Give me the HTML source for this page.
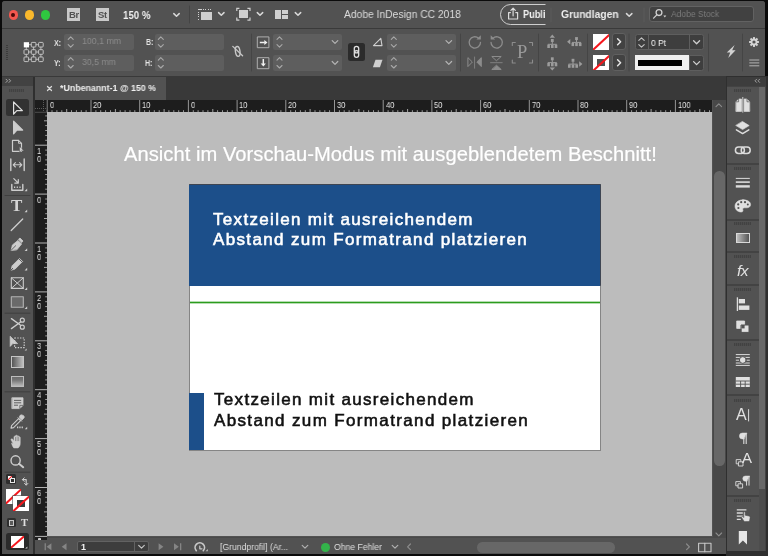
<!DOCTYPE html>
<html><head><meta charset="utf-8">
<style>
html,body{margin:0;padding:0;}
body{width:768px;height:556px;overflow:hidden;background:#0b0b0b;font-family:"Liberation Sans",sans-serif;position:relative;}
.a{position:absolute;}
#win{left:1.8px;top:1px;width:763.5px;height:553px;background:#525252;border-radius:3px 3px 0 0;overflow:hidden;}
svg{position:absolute;overflow:visible;}
.t{position:absolute;white-space:nowrap;color:#e6e6e6;will-change:transform;}
</style></head><body>
<div id="win" class="a"></div>
<!-- title bar -->
<div class="a" id="titlebar" style="left:1.8px;top:1px;width:763.5px;height:27px;background:#525252;border-radius:3px 3px 0 0;"></div>

<!-- ===== TITLE BAR CONTENT ===== -->
<div class="a" style="left:8.5px;top:10.4px;width:9.6px;height:9.6px;border-radius:50%;background:#f4574f;"></div>
<div class="a" style="left:11.4px;top:13.3px;width:3.8px;height:3.8px;border-radius:50%;background:#4a0a08;"></div>
<div class="a" style="left:24.6px;top:10.4px;width:9.6px;height:9.6px;border-radius:50%;background:#fbb92c;"></div>
<div class="a" style="left:40.6px;top:10.4px;width:9.6px;height:9.6px;border-radius:50%;background:#2fc840;"></div>
<div class="a" style="left:67px;top:8px;width:13px;height:12.6px;background:#c9c9c9;"></div>
<div class="t" style="left:68.6px;top:9px;font-size:9.5px;color:#525252;font-weight:bold;letter-spacing:-0.3px;">Br</div>
<div class="a" style="left:96px;top:8px;width:13px;height:12.6px;background:#c9c9c9;"></div>
<div class="t" style="left:98px;top:9px;font-size:9.5px;color:#525252;font-weight:bold;letter-spacing:-0.3px;">St</div>
<div class="t sx" style="left:122.5px;top:8.5px;font-size:11.5px;color:#f0f0f0;font-weight:bold;transform:scaleX(0.843);">150 %</div>
<svg style="left:0;top:0" width="768" height="100" fill="none" stroke="#d8d8d8" stroke-width="1.3" stroke-linecap="round" stroke-linejoin="round">
<g stroke-width="1.500"><path d="M173.800 13.600l2.700 2.700l2.700-2.700"/>
<path d="M218.600 12.600l2.700 2.700l2.700-2.700"/>
<path d="M257.300 12.600l2.700 2.700l2.700-2.700"/>
<path d="M295.300 12.600l2.700 2.700l2.700-2.700"/>
<path d="M626.500 13.600l2.700 2.700l2.700-2.700"/></g>
<path d="M189.500 6v17" stroke="#444" stroke-width="1"/>
<path d="M551 8v14" stroke="#5a5a5a" stroke-width="1"/>
<path d="M644 8v14" stroke="#5a5a5a" stroke-width="1"/>
</svg>
<!-- view options icon -->
<div class="a" style="left:201px;top:11.5px;width:11px;height:8.5px;background:#cfcfcf;"></div>
<div class="a" style="left:201px;top:8.5px;width:11px;height:1.5px;background:repeating-linear-gradient(90deg,#cfcfcf 0 1px,transparent 1px 2.2px);"></div>
<div class="a" style="left:197.5px;top:11.5px;width:1.5px;height:8.5px;background:repeating-linear-gradient(180deg,#cfcfcf 0 1px,transparent 1px 2.2px);"></div>
<div class="a" style="left:197.5px;top:8.5px;width:3px;height:1px;background:#cfcfcf;"></div>
<!-- screen mode icon -->
<div class="a" style="left:239px;top:10.4px;width:8.6px;height:7.8px;background:#cfcfcf;"></div>
<svg style="left:0;top:0" width="768" height="100" fill="none" stroke="#cfcfcf" stroke-width="1.2">
<path d="M236.8 11v-2.6h2.6M247.4 8.400h2.6v2.600M250 17.600v2.600h-2.600M239.400 20.200h-2.600v-2.600"/>
</svg>
<!-- arrange icon -->
<div class="a" style="left:274.5px;top:9.5px;width:6px;height:9.5px;background:#cfcfcf;"></div>
<div class="a" style="left:281.5px;top:9.5px;width:6.5px;height:4.2px;background:#cfcfcf;"></div>
<div class="a" style="left:281.5px;top:14.8px;width:6.5px;height:4.2px;background:#cfcfcf;"></div>
<div class="t sx" style="left:343.7px;top:7.5px;font-size:10.5px;color:#dcdcdc;transform:scaleX(0.981);">Adobe InDesign CC 2018</div>
<!-- publish pill -->
<div class="a" style="left:499.5px;top:3.5px;width:60px;height:21.5px;border:1.5px solid #cecece;border-radius:11px;box-sizing:border-box;clip-path:inset(0 14px 0 0);"></div>
<svg style="left:0;top:0" width="768" height="100" fill="none" stroke="#dcdcdc" stroke-width="1.2" stroke-linejoin="round" stroke-linecap="round">
<path d="M510.4 12.600h-1.800v6.400h9v-6.400h-1.800M513.100 15.800v-7.200M510.900 10.400l2.200-2.200l2.200 2.200"/>
</svg>
<div class="t sx" style="left:523px;top:7.6px;font-size:10.5px;color:#f2f2f2;font-weight:bold;transform:scaleX(0.876);">Publi</div>
<div class="t sx" style="left:560.5px;top:7.5px;font-size:10.5px;color:#ececec;font-weight:bold;transform:scaleX(0.976);">Grundlagen</div>
<!-- search -->
<div class="a" style="left:649.3px;top:6.2px;width:104.5px;height:16px;background:#414141;border:1px solid #626262;border-radius:3px;box-sizing:border-box;"></div>
<svg style="left:0;top:0" width="768" height="100" fill="none" stroke="#cfcfcf" stroke-width="1.3" stroke-linecap="round">
<circle cx="659" cy="12.6" r="2.9"/><path d="M656.8 14.9l-3.2 3.2"/><path d="M663.3 15.6h3l-1.5 1.8z" fill="#cfcfcf" stroke="none"/>
</svg>
<div class="t sx" style="left:670.5px;top:7.7px;font-size:9.5px;color:#7c7c7c;transform:scaleX(0.895);">Adobe Stock</div>
<!-- control bar -->
<div class="a" id="ctrl" style="left:1.8px;top:28px;width:763.5px;height:48px;background:#525252;border-top:1px solid #3a3a3a;box-sizing:border-box;"></div>

<!-- ===== CONTROL BAR CONTENT ===== -->
<style>
.f{position:absolute;background:#5e5e5e;border-radius:2px;}
.lb{will-change:transform;position:absolute;font-size:9.5px;font-weight:bold;color:#e4e4e4;white-space:nowrap;transform:scaleX(0.74);transform-origin:0 50%;}
.sx{transform-origin:0 50%;}
</style>
<div class="a" style="left:6px;top:44.5px;width:2px;height:15px;background:repeating-linear-gradient(180deg,#3c3c3c 0 1px,transparent 1px 2px);"></div>
<!-- reference point -->
<svg style="left:0;top:0" width="768" height="100" fill="none" stroke="#cfcfcf" stroke-width="0.9">
<path d="M26 44.7h16M26 52h16M26 59.3h16M26.3 44.7v15M33.6 44.7v15M40.9 44.7v15" stroke-width="0.8"/>
<g fill="#525252">
<rect x="31.3" y="42.4" width="4.6" height="4.6" rx="0.8"/><rect x="38.6" y="42.4" width="4.6" height="4.6" rx="0.8"/>
<rect x="24" y="49.7" width="4.6" height="4.6" rx="0.8"/><rect x="31.3" y="49.7" width="4.6" height="4.6" rx="0.8"/><rect x="38.6" y="49.7" width="4.6" height="4.6" rx="0.8"/>
<rect x="24" y="57" width="4.6" height="4.6" rx="0.8"/><rect x="31.3" y="57" width="4.6" height="4.6" rx="0.8"/><rect x="38.6" y="57" width="4.6" height="4.6" rx="0.8"/>
</g>
<rect x="23.8" y="42.2" width="5.2" height="5.2" fill="#ffffff" stroke="none"/>
</svg>
<div class="lb" style="left:54px;top:36.8px;">X:</div>
<div class="lb" style="left:54px;top:57.4px;">Y:</div>
<div class="f" style="left:64.2px;top:33.7px;width:69.5px;height:16.3px;"></div>
<div class="f" style="left:64.2px;top:54.6px;width:69.5px;height:16.3px;"></div>
<div class="t sx" style="left:82.2px;top:35.4px;font-size:9.5px;color:#8c8c8c;transform:scaleX(0.925);">100,1 mm</div>
<div class="t sx" style="left:82.2px;top:56px;font-size:9.5px;color:#8c8c8c;transform:scaleX(0.917);">30,5 mm</div>
<div class="lb" style="left:146.3px;top:36.2px;">B:</div>
<div class="lb" style="left:145px;top:57.4px;">H:</div>
<div class="f" style="left:155px;top:33.7px;width:69px;height:16.3px;"></div>
<div class="f" style="left:155px;top:54.6px;width:69px;height:16.3px;"></div>
<div class="f" style="left:273px;top:33.7px;width:69px;height:16.3px;"></div>
<div class="f" style="left:273px;top:54.6px;width:69px;height:16.3px;"></div>
<div class="f" style="left:387px;top:33.7px;width:69.3px;height:16.3px;"></div>
<div class="f" style="left:387px;top:54.6px;width:69.3px;height:16.3px;"></div>
<!-- spinner chevrons -->
<svg style="left:0;top:0" width="768" height="100" fill="none" stroke="#a8a8a8" stroke-width="1.1" stroke-linecap="round" stroke-linejoin="round">
<defs><g id="sp"><path d="M-2.5 -2.5l2.5-2.5l2.5 2.5M-2.5 2.8l2.5 2.5l2.5-2.5"/></g></defs>
<use href="#sp" x="70.7" y="41.8"/><use href="#sp" x="70.7" y="62.7"/>
<use href="#sp" x="160.8" y="41.8"/><use href="#sp" x="160.8" y="62.7"/>
<use href="#sp" x="279.5" y="41.8"/><use href="#sp" x="279.5" y="62.7"/>
<use href="#sp" x="393.8" y="41.8"/><use href="#sp" x="393.8" y="62.7"/>
<g stroke="#b5b5b5" stroke-width="1.2">
<path d="M332.2 40.6l2.8 2.8l2.8-2.8M332.2 61.5l2.8 2.8l2.8-2.8"/>
<path d="M446 40.6l2.8 2.8l2.8-2.8M446 61.5l2.8 2.8l2.8-2.8"/>
</g>
<!-- separators -->
<g stroke="#454545" stroke-width="1">
<path d="M251.5 34v37M460.5 34v37M538.5 34v37M587.5 34v37M629 34v37M708.5 34v37M742.5 34v37"/>
</g>
<!-- unlink icon -->
<g stroke="#c8c8c8" stroke-width="1.3">
<ellipse cx="237.700" cy="51.400" rx="2.300" ry="5" transform="rotate(-8 237.700 51.400)" stroke-width="1.400"/>
<path d="M232.800 46.400l9.800 9.400" stroke-width="1.300"/>
</g>
<!-- position icons -->
<g stroke="#d6d6d6" stroke-width="1.1">
<rect x="257.7" y="36.9" width="11.2" height="10.8" stroke="#b8b8b8" stroke-width="0.9"/><path d="M259.800 42.500h5" stroke="#f0f0f0" stroke-width="1.500" stroke-linecap="butt"/><path d="M264.300 39.900l3.200 2.600l-3.200 2.600z" fill="#f0f0f0" stroke="none"/>
<rect x="257.700" y="57.700" width="11.200" height="11" stroke="#b8b8b8" stroke-width="0.900"/><path d="M263.300 59v5" stroke="#f0f0f0" stroke-width="1.500" stroke-linecap="butt"/><path d="M260.700 63.400l2.600 3.200l2.600-3.200z" fill="#f0f0f0" stroke="none"/>
</g>
<!-- rotation angle / shear icons -->
<path d="M373.5 45.6h8.5l-1.2-7.3z" stroke="#cfcfcf" stroke-width="1.1"/>
<path d="M375.5 59.8h7l-2.6 7.4h-7z" fill="#cfcfcf" stroke="none"/>
</svg>
<!-- chain button -->
<div class="a" style="left:348px;top:43px;width:17px;height:17.5px;background:#2b2b2b;border-radius:2.5px;"></div>
<svg style="left:0;top:0" width="768" height="100" fill="none" stroke="#e0e0e0" stroke-width="1.3" stroke-linecap="round">
<rect x="354.3" y="46.3" width="4.4" height="6.6" rx="2.2"/><rect x="354.3" y="50.7" width="4.4" height="6.6" rx="2.2"/>
</svg>
<!-- disabled transform icons -->
<svg style="left:0;top:0" width="768" height="100" fill="none" stroke="#8c8c8c" stroke-width="1.3" stroke-linecap="round" stroke-linejoin="round">
<path d="M478.6 38.2a5.700 5.700 0 1 0 1.900 4.100" stroke-width="1.300"/><path d="M480.800 35.200v4.400h-4.400z" fill="#8c8c8c" stroke="none"/>
<path d="M492.900 38.200a5.700 5.700 0 1 1-1.900 4.100" stroke-width="1.300"/><path d="M490.700 35.200v4.400h4.400z" fill="#8c8c8c" stroke="none"/>
<path d="M467.900 58v8.600l4.200-4.300z" stroke-width="1"/><path d="M481.300 58v8.600l-4.200-4.300z" fill="#8c8c8c" stroke-width="1"/><path d="M474.600 56.600v12" stroke-width="0.800" stroke-linecap="butt"/>
<path d="M492.200 56.500h9l-4.500 4z" stroke-width="1"/><path d="M492.200 69.500h9l-4.500-4z" fill="#8c8c8c" stroke-width="1"/><path d="M490.200 62.700h12.400" stroke-width="0.800" stroke-linecap="butt"/>
<!-- P bracket -->
<path d="M512.300 45.500v-3h3M529.500 42.500h3v3M532.500 60v3h-3M515.300 63h-3v-3" stroke-width="1.100"/>
</svg>
<div class="t" style="left:517.4px;top:41.8px;font-size:18.500px;color:#9a9a9a;font-family:'Liberation Serif',serif;">P</div>
<!-- select container/content icons -->
<svg style="left:0;top:0" width="768" height="100" fill="#9c9c9c" stroke="none">
<defs><g id="tree"><rect x="-1.4" y="-3.2" width="2.8" height="3" /><rect x="-0.5" y="-0.4" width="1" height="2.4"/><rect x="-4.5" y="1.6" width="9" height="1"/><rect x="-5" y="2.4" width="2.6" height="3.4"/><rect x="-1.3" y="2.4" width="2.6" height="3.4"/><rect x="2.4" y="2.4" width="2.6" height="3.4"/></g></defs>
<use href="#tree" x="552.3" y="42.2"/><path d="M549.6 37.800l2.700-3.200l2.700 3.200z"/>
<use href="#tree" x="552.300" y="60.500"/><path d="M549.600 67.400l2.700 3l2.700-3z"/>
<use href="#tree" x="576.500" y="40.300"/><path d="M570.300 39l-3.200 2.800l3.200 2.800z"/>
<use href="#tree" x="573" y="62"/><path d="M579.2 61.2l3.2 2.8l-3.2 2.8z"/>
</svg>
<!-- fill / stroke swatches -->
<div class="a" style="left:593px;top:34.3px;width:16.3px;height:15.4px;background:#fff;overflow:hidden;"><div class="a" style="left:-4px;top:6.8px;width:25px;height:1.7px;background:#f5161c;transform:rotate(-43deg);"></div></div>
<div class="a" style="left:593px;top:55.1px;width:16.3px;height:15.4px;background:#fff;overflow:hidden;"><div class="a" style="left:4.2px;top:4px;width:8px;height:7.4px;background:#525252;"></div><div class="a" style="left:-4px;top:6.8px;width:25px;height:1.7px;background:#f5161c;transform:rotate(-43deg);"></div></div>
<div class="a" style="left:612.2px;top:33.4px;width:13.4px;height:16.8px;background:#424242;border:1px solid #606060;border-radius:3px;box-sizing:border-box;"></div>
<div class="a" style="left:612.2px;top:54.3px;width:13.4px;height:16.8px;background:#424242;border:1px solid #606060;border-radius:3px;box-sizing:border-box;"></div>
<!-- weight field -->
<div class="a" style="left:635px;top:33.8px;width:69px;height:16.4px;background:#3e3e3e;border:1px solid #5e5e5e;border-radius:2.5px;box-sizing:border-box;"></div>
<div class="a" style="left:647.8px;top:34.5px;width:1px;height:15px;background:#5e5e5e;"></div>
<div class="a" style="left:689.3px;top:34.5px;width:1px;height:15px;background:#5e5e5e;"></div>
<div class="t sx" style="left:651.2px;top:36.8px;font-size:9.5px;color:#f4f4f4;transform:scaleX(0.887);">0 Pt</div>
<div class="a" style="left:635px;top:54.8px;width:54.3px;height:15.6px;background:#f0f0f0;"></div>
<div class="a" style="left:638px;top:59.8px;width:43.8px;height:6.2px;background:#000;"></div>
<div class="a" style="left:689.3px;top:54.8px;width:14.7px;height:15.8px;background:#3e3e3e;border:1px solid #5e5e5e;border-radius:0 2.5px 2.5px 0;box-sizing:border-box;"></div>
<svg style="left:0;top:0" width="768" height="100" fill="none" stroke="#e4e4e4" stroke-width="1.3" stroke-linecap="round" stroke-linejoin="round">
<path d="M617.6 38.800l3 3l-3 3M617.600 59.700l3 3l-3 3" stroke-width="1.500"/>
<path d="M693.6 40.8l3 3l3-3M693.6 61.6l3 3l3-3" stroke="#cfcfcf"/>
<path d="M638.8 40.4l2.7-2.6l2.7 2.6M638.8 44.6l2.7 2.6l2.7-2.6" stroke="#c4c4c4" stroke-width="1.1"/>
<!-- lightning -->
<path d="M734.6 45l-7.800 7.600h3.400l-2 5.400l7.400-7.800h-3.400z" fill="#d2d2d2" stroke="none"/>
<!-- hamburger -->
<path d="M749.3 60h10M749.3 62.9h10M749.3 65.8h10" stroke="#bdbdbd" stroke-width="0.9" stroke-linecap="butt"/>
</svg>
<!-- gear -->
<svg style="left:749.4px;top:36.6px" width="10" height="10" viewBox="-5 -5 10 10">
<g fill="#d4d4d4"><circle r="3.4"/>
<g id="tt"><rect x="-1" y="-4.9" width="2" height="9.8"/></g><use href="#tt" transform="rotate(45)"/><use href="#tt" transform="rotate(90)"/><use href="#tt" transform="rotate(135)"/></g>
<circle r="1.6" fill="#525252"/>
</svg>
<!-- tab strip -->
<div class="a" id="tabstrip" style="left:1.8px;top:76px;width:763.5px;height:24px;background:#393939;"></div>
<div class="a" id="tab" style="left:35px;top:77px;width:131px;height:23px;background:#525252;"></div>
<div class="t sx" style="left:60px;top:83.3px;font-size:9px;font-weight:bold;color:#f0f0f0;transform:scaleX(0.982);">*Unbenannt-1 @ 150 %</div>
<svg style="left:0;top:0" width="768" height="120" fill="none" stroke="#d8d8d8" stroke-width="1.1" stroke-linecap="round"><path d="M47.5 86.5l4 4M51.5 86.5l-4 4" stroke-width="1.25"/>
</svg>
<!-- left toolbar -->
<div class="a" id="lt" style="left:2px;top:77px;width:31px;height:474px;background:#525252;"></div>
<div class="a" style="left:2px;top:77px;width:31px;height:8.5px;background:#424242;"></div>
<div class="a" style="left:33px;top:77px;width:2px;height:477px;background:#2f2f2f;"></div>

<!-- ===== LEFT TOOLBAR ICONS ===== -->
<svg style="left:0;top:0" width="40" height="100" fill="none"><path d="M6 79.2l1.6 1.6l-1.6 1.6M9 79.2l1.6 1.6l-1.6 1.6" stroke="#a6a6a6" stroke-width="1" stroke-linecap="round" stroke-linejoin="round"/></svg>
<div class="a" style="left:9.400px;top:89px;width:15px;height:3px;background:repeating-linear-gradient(90deg,#424242 0 1px,#4c4c4c 1px 2px);"></div>
<div class="a" style="left:6px;top:98.8px;width:22.5px;height:17px;background:#323232;border-radius:2.5px;"></div>
<svg style="left:0;top:0" width="40" height="556" fill="none" stroke="#cdcdcd" stroke-width="1.2" stroke-linejoin="round" stroke-linecap="round">
<!-- selection -->
<path d="M13.6 102v12.2l3.2-3.6h5.6z" stroke="#e0e0e0"/>
<!-- direct selection -->
<path d="M13.6 121.2v12.6l3.3-3.7h5.8z" fill="#cdcdcd"/>
<!-- page tool -->
<path d="M12.5 140.3h6l3 3v8h-9z"/><path d="M18.5 140.3v3h3" stroke-width="0.9"/><path d="M19.5 146.5v6l1.7-1.6h2.8z" fill="#cdcdcd" stroke="#525252" stroke-width="0.5"/>
<!-- gap tool -->
<path d="M10.8 159v11.6M24.2 159v11.6" stroke-width="1.4"/><path d="M13.3 164.8h8.4M15.4 162.6l-2.2 2.2l2.2 2.2M19.6 162.6l2.2 2.2l-2.2 2.2" stroke-width="1.1"/>
<!-- content collector -->
<path d="M11.8 184.5v5.8h11v-5.8" stroke-width="1.4"/><path d="M14 187.3h6.6" stroke-width="1.4" stroke-dasharray="1.2 1.5" stroke-linecap="butt"/><path d="M13.8 178.6l4 4M18.3 179.6v3.5h-3.5" stroke-width="1.2"/>
<path d="M27.2 188.6v2.6h-2.6z" fill="#cdcdcd" stroke="none"/>
<path d="M5 195.5h25" stroke="#3f3f3f" stroke-width="1"/>
<!-- line -->
<path d="M11.2 230.5l11.5-11.5" stroke-width="1.3"/>
<!-- pen -->
<path d="M11.2 250.2l1.2-5.2l5.6-4.6l3.6 3.6l-4.6 5.6z" fill="#cdcdcd" stroke-width="0.8"/><path d="M18.6 239.2l1.4-1.2l3 3l-1.2 1.4z" fill="#cdcdcd" stroke-width="0.8"/><path d="M11.4 250l4.2-4.2" stroke="#525252" stroke-width="0.9"/>
<path d="M27.2 248.3v2.6h-2.6z" fill="#cdcdcd" stroke="none"/>
<!-- pencil -->
<path d="M11.2 269.8l0.9-4l7.4-7.4l3.1 3.1l-7.4 7.4z" fill="#cdcdcd" stroke-width="0.8"/><path d="M19 259l3 3" stroke="#525252" stroke-width="0.9"/><path d="M11.3 269.7l1.3-1.3" stroke="#525252" stroke-width="1"/>
<path d="M27.2 267.8v2.6h-2.6z" fill="#cdcdcd" stroke="none"/>
<!-- frame -->
<rect x="11.3" y="277.8" width="12" height="10.6" stroke-width="1.1"/><path d="M11.3 277.8l12 10.6M23.3 277.8l-12 10.6" stroke-width="1"/>
<path d="M27.2 287.3v2.6h-2.6z" fill="#cdcdcd" stroke="none"/>
<!-- rectangle -->
<rect x="11.3" y="296.8" width="12" height="10.4" fill="#6a6a6a" stroke="#b4b4b4" stroke-width="1.1"/>
<path d="M27.2 306.3v2.6h-2.6z" fill="#cdcdcd" stroke="none"/>
<path d="M5 313.2h25" stroke="#3f3f3f" stroke-width="1"/>
<!-- scissors -->
<path d="M11.4 318.6l9.2 6.6M11.4 328.6l9.2-6.6" stroke-width="1.3"/><circle cx="22.3" cy="320.2" r="2" stroke-width="1.2"/><circle cx="22.3" cy="327.2" r="2" stroke-width="1.2"/>
<!-- free transform -->
<path d="M10.2 336.6v9.8l2.6-2.8h4.4z" fill="#cdcdcd" stroke-width="0.8"/><rect x="14.6" y="338" width="9.6" height="9.6" stroke-width="1.2" stroke-dasharray="1.4 1.3" stroke-linecap="butt"/>
<path d="M26.6 348.6v2h-2z" fill="#cdcdcd" stroke="none"/>
</svg>
<div class="a" style="left:10.8px;top:356.4px;width:13px;height:12px;box-sizing:border-box;border:1px solid #c4c4c4;background:linear-gradient(90deg,#555,#bdbdbd);"></div>
<div class="a" style="left:10.8px;top:375.8px;width:13px;height:11.6px;box-sizing:border-box;border:1px solid #bdbdbd;background:linear-gradient(180deg,#6a6a6a 0,#777 35%,#b9b9b9 100%);"></div>
<svg style="left:0;top:0" width="40" height="556" fill="none" stroke="#cdcdcd" stroke-width="1.2" stroke-linejoin="round" stroke-linecap="round">
<path d="M5 391.8h25" stroke="#3f3f3f" stroke-width="1"/>
<!-- note -->
<path d="M12.2 397.8h10.8v7.6l-3.2 3.2h-7.6z" fill="#cdcdcd" stroke-width="0.8"/><path d="M14 400.4h7.2M14 402.8h7.2M14 405.2h4" stroke="#525252" stroke-width="0.9" stroke-linecap="butt"/><path d="M19.8 408.4v-3h3" stroke="#525252" stroke-width="0.7"/>
<!-- eyedropper -->
<path d="M11 428.2l0.6-2.6l7-7l2 2l-7 7z" stroke-width="1.1"/><path d="M18 417.6l3.6 3.6M19.6 417.4a1.9 1.9 0 0 1 2.8 -2.2a1.9 1.9 0 0 1 1 3.4l-1.6 1.4z" fill="#cdcdcd" stroke-width="0.9"/><path d="M17 427.4h6.4" stroke-width="1.6" stroke-dasharray="1.3 1" stroke-linecap="butt"/>
<path d="M27.2 426.8v2.4h-2.4z" fill="#cdcdcd" stroke="none"/>
<!-- hand -->
<path d="M13.2 443.4l-2-3.2c-.6-1 .6-1.800 1.400-1l1.400 1.600v-3.800c0-1.100 1.500-1.100 1.500 0v-1c0-1.100 1.600-1.100 1.600 0v0.500c0-1.100 1.600-1.100 1.600 0v1c0-1 1.500-1 1.500 0v6c0 2-1 3.400-2 4.400h-4.400c-.8-.9-1.500-2.200-2.200-4.500z" fill="#cdcdcd" stroke-width="0.6"/>
<path d="M15.5 437.500v3.200M17.100 436.800v3.900M18.700 437.500v3.200" stroke="#525252" stroke-width="0.5"/>
<!-- zoom -->
<circle cx="15.600" cy="460.400" r="4.600" stroke-width="1.400"/><path d="M19 463.800l4.200 3.400" stroke-width="2"/>
<path d="M5 472.200h25" stroke="#3f3f3f" stroke-width="1"/>
<!-- swap arrows -->
<path d="M22.600 479.600h3.600v5.200" stroke-width="1.100"/><path d="M24.200 477.800l-1.800 1.800l1.800 1.800M24.500 483.400l1.700 1.800l1.700-1.800" stroke-width="1"/>
</svg>
<!-- default fill/stroke mini -->
<div class="a" style="left:6.300px;top:474.200px;width:9.400px;height:9.800px;background:#2e2e2e;border-radius:1.500px;"></div>
<div class="a" style="left:7.600px;top:475.600px;width:4.600px;height:4.600px;background:#fff;overflow:hidden;"><div class="a" style="left:-2px;top:1.800px;width:9px;height:1.100px;background:#f5161c;transform:rotate(-45deg);"></div></div>
<div class="a" style="left:10px;top:478.200px;width:4.600px;height:4.600px;box-sizing:border-box;border:1.200px solid #e8e8e8;background:#2e2e2e;"></div>
<!-- fill / stroke big -->
<div class="a" style="left:5.700px;top:489px;width:15.800px;height:14.700px;background:#fff;overflow:hidden;"><div class="a" style="left:-4px;top:6.400px;width:24px;height:1.900px;background:#f5161c;transform:rotate(-43deg);"></div></div>
<div class="a" style="left:13.200px;top:496.200px;width:15.800px;height:15px;background:#fff;overflow:hidden;box-shadow:0 0 0 0.600px #525252;"><div class="a" style="left:4.200px;top:4px;width:7.400px;height:7px;background:#3a3a3a;"></div><div class="a" style="left:-4px;top:6.600px;width:24px;height:1.900px;background:#f5161c;transform:rotate(-43deg);"></div></div>
<!-- mini buttons -->
<div class="a" style="left:6.800px;top:518.200px;width:9.400px;height:9px;background:#2e2e2e;border-radius:1.500px;"></div>
<div class="a" style="left:8.600px;top:519.800px;width:5.800px;height:5.800px;box-sizing:border-box;border:1px solid #c8c8c8;background:#5a5a5a;"></div>
<div class="t" style="left:21.300px;top:517.400px;font-size:10.500px;font-weight:bold;color:#e0e0e0;font-family:'Liberation Serif',serif;">T</div>
<!-- bottom preview-mode button -->
<div class="a" style="left:5.700px;top:533.200px;width:23.300px;height:17px;background:#2b2b2b;border-radius:2.500px;"></div>
<div class="a" style="left:10.900px;top:536px;width:13px;height:11.500px;background:#fff;overflow:hidden;"><div class="a" style="left:-4px;top:4.900px;width:21px;height:1.700px;background:#f5161c;transform:rotate(-41deg);"></div></div>
<svg style="left:0;top:0" width="40" height="556"><path d="M27.400 546.400v2.200h-2.200z" fill="#d0d0d0"/></svg>
<!-- T tool -->
<div class="t" style="left:11.400px;top:196.300px;font-size:17px;font-weight:bold;color:#d4d4d4;font-family:'Liberation Serif',serif;">T</div>
<svg style="left:0;top:0" width="40" height="556"><path d="M27.200 209.600v2.600h-2.600z" fill="#cdcdcd"/></svg>
<!-- rulers -->
<div class="a" id="hr" style="left:35px;top:100px;width:677px;height:12px;background:#1d1d1d;"></div>
<div class="a" id="vr" style="left:35px;top:112px;width:12.3px;height:425px;background:#1d1d1d;"></div>
<!-- ===== RULER TICKS ===== -->
<svg style="left:0;top:0" width="768" height="556" fill="none" stroke-linecap="butt">
<path d="M47.2 110.200v1.800M52.0 110.200v1.800M56.9 110.200v1.800M61.8 110.200v1.800M71.5 110.200v1.800M76.4 110.200v1.800M81.3 110.200v1.800M86.1 110.200v1.800M95.9 110.200v1.800M100.7 110.200v1.800M105.6 110.200v1.800M110.5 110.200v1.800M120.2 110.200v1.800M125.1 110.200v1.800M130.0 110.200v1.800M134.8 110.200v1.800M144.6 110.200v1.800M149.4 110.200v1.800M154.3 110.200v1.800M159.2 110.200v1.800M168.9 110.200v1.800M173.8 110.200v1.800M178.7 110.200v1.800M183.5 110.200v1.800M193.3 110.200v1.800M198.1 110.200v1.800M203.0 110.200v1.800M207.9 110.200v1.800M217.6 110.200v1.800M222.5 110.200v1.800M227.4 110.200v1.800M232.2 110.200v1.800M242.0 110.200v1.800M246.8 110.200v1.800M251.7 110.200v1.800M256.6 110.200v1.800M266.3 110.200v1.800M271.2 110.200v1.800M276.1 110.200v1.800M280.9 110.200v1.800M290.7 110.200v1.800M295.5 110.200v1.800M300.4 110.200v1.800M305.3 110.200v1.800M315.0 110.200v1.800M319.9 110.200v1.800M324.8 110.200v1.800M329.6 110.200v1.800M339.4 110.200v1.800M344.2 110.200v1.800M349.1 110.200v1.800M354.0 110.200v1.800M363.7 110.200v1.800M368.6 110.200v1.800M373.5 110.200v1.800M378.3 110.200v1.800M388.1 110.200v1.800M392.9 110.200v1.800M397.8 110.200v1.800M402.7 110.200v1.800M412.4 110.200v1.800M417.3 110.200v1.800M422.2 110.200v1.800M427.0 110.200v1.800M436.8 110.200v1.800M441.6 110.200v1.800M446.5 110.200v1.800M451.4 110.200v1.800M461.1 110.200v1.800M466.0 110.200v1.800M470.9 110.200v1.800M475.7 110.200v1.800M485.5 110.200v1.800M490.3 110.200v1.800M495.2 110.200v1.800M500.1 110.200v1.800M509.8 110.200v1.800M514.7 110.200v1.800M519.6 110.200v1.800M524.4 110.200v1.800M534.2 110.200v1.800M539.0 110.200v1.800M543.9 110.200v1.800M548.8 110.200v1.800M558.5 110.200v1.800M563.4 110.200v1.800M568.3 110.200v1.800M573.1 110.200v1.800M582.9 110.200v1.800M587.7 110.200v1.800M592.6 110.200v1.800M597.5 110.200v1.800M607.2 110.200v1.800M612.1 110.200v1.800M617.0 110.200v1.800M621.8 110.200v1.800M631.6 110.200v1.800M636.4 110.200v1.800M641.3 110.200v1.800M646.2 110.200v1.800M655.9 110.200v1.800M660.8 110.200v1.800M665.7 110.200v1.800M670.5 110.200v1.800M680.3 110.200v1.800M685.1 110.200v1.800M690.0 110.200v1.800M694.9 110.200v1.800M704.6 110.200v1.800M709.5 110.200v1.800" stroke="#a8a8a8" stroke-width="0.9"/>
<path d="M66.7 109v3M115.4 109v3M164.1 109v3M212.8 109v3M261.4 109v3M310.1 109v3M358.9 109v3M407.6 109v3M456.2 109v3M505.0 109v3M553.6 109v3M602.4 109v3M651.1 109v3M699.8 109v3" stroke="#b4b4b4" stroke-width="0.9"/>
<path d="M91.0 100v12M139.7 100v12M188.4 100v12M237.1 100v12M285.8 100v12M334.5 100v12M383.2 100v12M431.9 100v12M480.6 100v12M529.3 100v12M578.0 100v12M626.7 100v12M675.4 100v12M47.3 100v12" stroke="#a4a4a4" stroke-width="0.9"/>
<path d="M45.200 115.9h1.800M45.200 125.6h1.800M45.200 130.5h1.800M45.200 135.4h1.800M45.200 140.3h1.800M45.200 150.1h1.800M45.200 155.0h1.800M45.200 159.9h1.800M45.200 164.8h1.800M45.200 174.5h1.800M45.200 179.4h1.800M45.200 184.3h1.800M45.200 189.2h1.800M45.200 199.0h1.800M45.200 203.9h1.800M45.200 208.8h1.800M45.200 213.7h1.800M45.200 223.4h1.800M45.200 228.3h1.800M45.200 233.2h1.800M45.200 238.1h1.800M45.200 247.9h1.800M45.200 252.8h1.800M45.200 257.7h1.800M45.200 262.6h1.800M45.200 272.3h1.800M45.200 277.2h1.800M45.200 282.1h1.800M45.200 287.0h1.800M45.200 296.8h1.800M45.200 301.7h1.800M45.200 306.6h1.800M45.200 311.5h1.800M45.200 321.2h1.800M45.200 326.1h1.800M45.200 331.0h1.800M45.200 335.9h1.800M45.200 345.7h1.800M45.200 350.6h1.800M45.200 355.5h1.800M45.200 360.4h1.800M45.200 370.1h1.800M45.200 375.0h1.800M45.200 379.9h1.800M45.200 384.8h1.800M45.200 394.6h1.800M45.200 399.5h1.800M45.200 404.4h1.800M45.200 409.3h1.800M45.200 419.0h1.800M45.200 423.9h1.800M45.200 428.8h1.800M45.200 433.7h1.800M45.200 443.5h1.800M45.200 448.4h1.800M45.200 453.3h1.800M45.200 458.2h1.800M45.200 467.9h1.800M45.200 472.8h1.800M45.200 477.7h1.800M45.200 482.6h1.800M45.200 492.4h1.800M45.200 497.3h1.800M45.200 502.2h1.800M45.200 507.1h1.800M45.200 516.8h1.800M45.200 521.7h1.800M45.200 526.6h1.800M45.200 531.5h1.800" stroke="#a8a8a8" stroke-width="0.9"/>
<path d="M44 120.8h3M44 169.7h3M44 218.5h3M44 267.4h3M44 316.3h3M44 365.2h3M44 414.1h3M44 463.0h3M44 511.9h3" stroke="#b4b4b4" stroke-width="0.9"/>
<path d="M35 145.2h12M35 194.1h12M35 243.0h12M35 291.9h12M35 340.8h12M35 389.7h12M35 438.6h12M35 487.5h12M35 536.4h12" stroke="#c4c4c4" stroke-width="0.9"/>
<path d="M35 108.500h12M43.500 100v12" stroke="#6a6a6a" stroke-width="0.8" stroke-dasharray="1 1"/>
<path d="M47.300 100v12M35 112.300h12.300" stroke="#5a5a5a" stroke-width="0.8"/>
</svg>
<style>.rl{will-change:transform;position:absolute;font-size:8.600px;color:#e2e2e2;line-height:5.700px;transform:scaleX(0.880);transform-origin:0 0;white-space:pre;}.rv{line-height:7.7px;}</style>
<div class="rl" style="left:93.3px;top:103px;">20</div><div class="rl" style="left:142.0px;top:103px;">10</div><div class="rl" style="left:190.7px;top:103px;">0</div><div class="rl" style="left:239.4px;top:103px;">10</div><div class="rl" style="left:288.1px;top:103px;">20</div><div class="rl" style="left:336.8px;top:103px;">30</div><div class="rl" style="left:385.5px;top:103px;">40</div><div class="rl" style="left:434.2px;top:103px;">50</div><div class="rl" style="left:482.9px;top:103px;">60</div><div class="rl" style="left:531.6px;top:103px;">70</div><div class="rl" style="left:580.3px;top:103px;">80</div><div class="rl" style="left:629.0px;top:103px;">90</div><div class="rl" style="left:677.7px;top:103px;">100</div><div class="rl" style="left:49.6px;top:103px;">0</div>
<div class="rl rv" style="left:36.8px;top:147.8px;">1<br>0</div><div class="rl rv" style="left:36.8px;top:196.7px;">0</div><div class="rl rv" style="left:36.8px;top:245.6px;">1<br>0</div><div class="rl rv" style="left:36.8px;top:294.5px;">2<br>0</div><div class="rl rv" style="left:36.8px;top:343.4px;">3<br>0</div><div class="rl rv" style="left:36.8px;top:392.3px;">4<br>0</div><div class="rl rv" style="left:36.8px;top:441.2px;">5<br>0</div><div class="rl rv" style="left:36.8px;top:490.1px;">6<br>0</div><div class="rl rv" style="left:36.8px;top:539.0px;">7<br>0</div>
<!-- pasteboard -->
<div class="a" id="pb" style="left:47.3px;top:112.3px;width:665.2px;height:424.2px;background:#bcbcbc;"></div>
<!-- heading -->
<div class="t" id="head" style="left:124.3px;top:142px;font-size:20.15px;color:#fff;letter-spacing:0.04px;-webkit-text-stroke:0.2px #fff;transform:translateY(0.8px);">Ansicht im Vorschau-Modus mit ausgeblendetem Beschnitt!</div>
<!-- page -->
<div class="a" id="pageb" style="left:188.5px;top:184px;width:412.5px;height:267.2px;background:#858585;"></div>
<div class="a" id="page" style="left:189.7px;top:184.6px;width:410.4px;height:265.6px;background:#fff;"></div>
<div class="a" id="blue1" style="left:189.2px;top:184.5px;width:411px;height:101.400px;background:#1c4f8a;box-shadow:0.500px -0.500px 0 0.300px rgba(16,28,50,0.750);"></div>
<div class="a" id="green" style="left:189.500px;top:301px;width:410.600px;height:3px;background:linear-gradient(180deg,rgba(44,156,30,0.35) 0 1px,#2c9c1e 1px 2px,rgba(44,156,30,0.35) 2px 3px);"></div>
<div class="a" id="blue2" style="left:189.2px;top:392.800px;width:15px;height:57.600px;background:#1c4f8a;"></div>
<div class="t pt" id="p1" style="left:213px;top:208.8px;color:#fff;">Textzeilen mit ausreichendem</div>
<div class="t pt" id="p1b" style="left:213px;top:229.4px;color:#fff;letter-spacing:1.29px;">Abstand zum Formatrand platzieren</div>
<div class="t pt" id="p2" style="left:213.7px;top:389.1px;color:#111;">Textzeilen mit ausreichendem</div>
<div class="t pt" id="p2b" style="left:213.7px;top:409.8px;color:#111;letter-spacing:1.29px;">Abstand zum Formatrand platzieren</div>
<style>.pt{font-size:16.1px;line-height:20.6px;letter-spacing:1.25px;-webkit-text-stroke:0.55px currentColor;transform:scaleX(1.056);transform-origin:0 0;}</style>
<!-- vertical scrollbar -->
<div class="a" id="vs" style="left:712.5px;top:99.5px;width:13.5px;height:439px;background:#484848;"></div>
<div class="a" style="left:714.2px;top:171px;width:10.4px;height:295px;background:#676767;border-radius:5.2px;"></div>
<svg style="left:0;top:0" width="768" height="556" fill="none" stroke="#8c8c8c" stroke-width="1.1" stroke-linecap="round" stroke-linejoin="round"><path d="M716 106.6l2.8-2.8l2.8 2.8M716 533l2.8 2.8l2.800-2.8"/></svg>
<!-- bottom bar -->
<div class="a" id="bb" style="left:35px;top:537px;width:691px;height:16.600px;background:#525252;border-top:1.500px solid #494949;box-sizing:border-box;"></div>
<div class="a" style="left:35px;top:537px;width:12.3px;height:2.6px;background:#1d1d1d;"></div><div class="a" style="left:37.6px;top:538.2px;width:3.4px;height:1.4px;background:#cfcfcf;border-radius:0.7px 0.7px 0 0;"></div>
<!-- bottom bar content -->
<div class="a" style="left:77px;top:540.8px;width:71.5px;height:11.4px;background:#3d3d3d;border:1px solid #626262;border-radius:2px;box-sizing:border-box;"></div>
<div class="a" style="left:134px;top:541.5px;width:1px;height:10px;background:#626262;"></div>
<svg style="left:0;top:0" width="768" height="556" fill="#858585" stroke="none">
<path d="M44.6 543.2h1.3v7h-1.3zM51.4 543.2v7l-4.8-3.5z"/>
<path d="M66.5 543.2v7l-4.8-3.5z"/>
<path d="M158.6 543.2v7l4.8-3.5z"/>
<path d="M174 543.2v7l4.8-3.5zM180 543.2h1.3v7h-1.3z"/>
<path d="M207.8 549v2.2h-2.2z" fill="#bdbdbd"/>
<g fill="none" stroke="#c4c4c4" stroke-width="1.2" stroke-linecap="round" stroke-linejoin="round">
<path d="M138.7 545.4l2.8 2.8l2.8-2.8"/>
<path d="M302.2 545.4l2.8 2.8l2.8-2.8" stroke="#b0b0b0"/>
<path d="M392.2 545.4l2.8 2.8l2.8-2.8" stroke="#b0b0b0"/>
<path d="M410.4 544l-2.8 2.8l2.8 2.8" stroke="#8c8c8c"/>
<path d="M686.6 544l2.8 2.8l-2.8 2.8" stroke="#8c8c8c"/>
<rect x="698.6" y="543.3" width="12.4" height="8.4" stroke="#c8c8c8" stroke-width="1.1"/><path d="M704.8 543.3v8.4" stroke="#c8c8c8" stroke-width="1.1"/>
<path d="M196.3 550.7a4.700 4.700 0 1 1 7 0" stroke="#c8c8c8" stroke-width="1.7"/><path d="M199.8 546.2v2.6h2.2" stroke="#c8c8c8" stroke-width="1.2"/>
</g>
</svg>
<div class="t" style="left:80.6px;top:541.8px;font-size:9px;font-weight:bold;color:#f2f2f2;">1</div>
<div class="t sx" style="left:220px;top:541.8px;font-size:9px;color:#dedede;transform:scaleX(0.96);">[Grundprofil] (Ar...</div>
<div class="a" style="left:320.5px;top:542.6px;width:9px;height:9px;border-radius:50%;background:#33b34a;"></div>
<div class="t sx" style="left:334px;top:541.8px;font-size:9px;color:#dedede;transform:scaleX(0.96);">Ohne Fehler</div>
<div class="a" style="left:476.5px;top:542px;width:138.5px;height:10.6px;background:#676767;border-radius:5.3px;"></div>

<!-- right dock -->
<div class="a" id="rd" style="left:726px;top:76px;width:42px;height:480px;background:#2f2f2f;"></div>
<div class="a" style="left:727px;top:76.5px;width:38.5px;height:474px;background:#434343;"></div>
<div class="a" style="left:727px;top:76.5px;width:38.5px;height:9px;background:#3d3d3d;"></div>
<div class="a" style="left:758.8px;top:87px;width:6.7px;height:463.6px;background:#4d4d4d;"></div>
<div class="a" style="left:758.8px;top:87px;width:6.7px;height:402px;background:#686868;"></div>
<style>.pg{position:absolute;left:727px;width:31.8px;background:#525252;}
.gr{position:absolute;left:734px;width:17px;height:3px;margin-top:-0.5px;background:repeating-linear-gradient(90deg,#424242 0 1px,#4c4c4c 1px 2px);}</style>
<div class="pg" style="top:87px;height:75.6px;"></div><div class="gr" style="top:89.3px;"></div>
<div class="pg" style="top:164.5px;height:54px;"></div><div class="gr" style="top:167.6px;"></div>
<div class="pg" style="top:220.5px;height:30.2px;"></div><div class="gr" style="top:222.6px;"></div>
<div class="pg" style="top:252.6px;height:31.3px;"></div><div class="gr" style="top:255.4px;"></div>
<div class="pg" style="top:285.8px;height:53.2px;"></div><div class="gr" style="top:288.2px;"></div>
<div class="pg" style="top:340.9px;height:53.4px;"></div><div class="gr" style="top:343.7px;"></div>
<div class="pg" style="top:396.2px;height:98.5px;"></div><div class="gr" style="top:399px;"></div>
<div class="pg" style="top:496.6px;height:54px;"></div><div class="gr" style="top:499.2px;"></div>
<svg style="left:0;top:0" width="768" height="556" fill="none" stroke="#dcdcdc" stroke-width="1.2" stroke-linejoin="round" stroke-linecap="round">
<path d="M759.6 79.2l-1.6 1.6l1.6 1.6M756.6 79.2l-1.6 1.6l1.6 1.6" stroke="#a8a8a8" stroke-width="0.9"/>
<!-- pages -->
<path d="M736.2 101.6l2.600-2.600h2.700v12.400h-5.300zM749.400 101.600l-2.600-2.600h-2.700v12.400h5.300z" fill="#e0e0e0" stroke-width="0.7"/><path d="M742.8 97.400v14.8" stroke="#e0e0e0" stroke-width="0.9"/><path d="M738.6 99.400v2.4h-2.2M747 99.400v2.4h2.2" stroke="#525252" stroke-width="0.7"/>
<!-- layers -->
<path d="M742.6 121.6l6.6 4l-6.6 4l-6.6-4z" fill="#e0e0e0" stroke-width="0.6"/><path d="M736.4 129.800l6.2 3.800l6.2-3.800" stroke-width="1.5"/>
<!-- links -->
<rect x="735.4" y="147" width="9" height="6.4" rx="3.2" stroke-width="1.5"/><rect x="741.2" y="147" width="9" height="6.4" rx="3.2" stroke-width="1.5"/>
<!-- stroke -->
<path d="M735.8 178.400h14" stroke-width="1" stroke-linecap="butt"/><path d="M735.800 182.100h14" stroke-width="1.600" stroke-linecap="butt"/><path d="M735.800 186.400h14" stroke-width="2.400" stroke-linecap="butt"/>
<!-- swatches palette -->
<path d="M743 199.800c-4.600 0-8 2.800-8 6.400c0 3.400 2.800 5.800 6.200 5.800c1.800 0 2-1.200 1.600-2.200c-.4-1.200.4-2 1.600-2h2.600c2 0 3.600-1.200 3.600-3.200c0-2.800-3.400-4.800-7.600-4.800z" fill="#e0e0e0" stroke-width="0.6"/>
<g fill="#525252" stroke="none"><circle cx="738.2" cy="204.4" r="1.1"/><circle cx="741.2" cy="202.2" r="1.1"/><circle cx="745" cy="202.2" r="1.1"/><circle cx="738.4" cy="208" r="1.1"/><circle cx="747.8" cy="204.4" r="1"/></g>
<!-- align -->
<path d="M737.4 297.300v13.700" stroke-width="1.3" stroke-linecap="butt"/><rect x="738.8" y="299" width="6.2" height="4.4" fill="#e0e0e0" stroke="none"/><rect x="738.8" y="305.500" width="10.6" height="4.4" fill="#e0e0e0" stroke="none"/>
<!-- pathfinder -->
<rect x="737" y="321" width="7.6" height="7.4" fill="#e0e0e0" stroke="#e0e0e0" stroke-width="0.8"/><rect x="741.4" y="325" width="7.6" height="7.4" fill="#e0e0e0" stroke="#525252" stroke-width="1"/><rect x="741.4" y="325" width="3.2" height="3.4" fill="#525252" stroke="none"/>
<!-- text wrap -->
<path d="M735.8 354.600h14M735.8 357.400h14M735.8 360.200h14M735.8 363h14M735.8 365.400h14" stroke-width="1" stroke-linecap="butt"/><circle cx="742.8" cy="360" r="3.4" fill="#e0e0e0" stroke="#525252" stroke-width="1"/>
<!-- table -->
<rect x="735.8" y="377" width="14" height="10" fill="#e0e0e0" stroke="none"/><path d="M735.8 381h14M735.8 384.200h14M740.6 381v6M745.2 381v6" stroke="#525252" stroke-width="0.9" stroke-linecap="butt"/>
<!-- A| cursor -->
<path d="M748.6 409.200v12.200" stroke-width="1" stroke-linecap="butt"/>
<!-- pilcrow -->
<path d="M743.8 433v11M746.2 433v11" stroke-width="1.1" stroke-linecap="butt"/><path d="M746.6 433h-4.200a3 3 0 0 0 0 6h1.400z" fill="#e0e0e0" stroke-width="0.5"/>
<!-- obj A -->
<rect x="736.6" y="459.600" width="4.2" height="4.2" stroke-width="0.9"/><rect x="738.8" y="461.800" width="4.2" height="4.2" fill="#525252" stroke-width="0.9"/>
<!-- obj pilcrow -->
<rect x="736.2" y="481.600" width="4.2" height="4.2" stroke-width="0.9"/><rect x="738.4" y="483.800" width="4.2" height="4.2" fill="#525252" stroke-width="0.9"/>
<path d="M746.6 476v9.600M749 476v9.600" stroke-width="1" stroke-linecap="butt"/><path d="M749.4 476h-4a2.600 2.600 0 0 0 0 5.200h1.400z" fill="#e0e0e0" stroke-width="0.5"/>
<!-- lines + hand -->
<path d="M736.8 509.800h9.600M736.8 513h6M736.8 516.200h6M736.8 519.400h4" stroke-width="1.3" stroke-linecap="butt"/>
<path d="M743.6 512.600c0-1.200 1.600-1.200 1.600 0v2.600l3.600.8c.9.200 1.400.8 1.300 1.800l-.4 2.400c-.1.900-.7 1.400-1.600 1.400h-2.800c-.7 0-1.200-.3-1.600-.9l-2-3c-.5-.9.500-1.600 1.200-1l.7.600z" fill="#e0e0e0" stroke="#525252" stroke-width="0.6"/>
<!-- bookmark -->
<path d="M738.8 531h8.200v13.400l-4.100-3.800l-4.100 3.800z" fill="#e6e6e6" stroke="none"/>
</svg>
<div class="a" style="left:735.8px;top:232.8px;width:14.2px;height:10.6px;box-sizing:border-box;border:1.1px solid #d8d8d8;background:linear-gradient(90deg,#bdbdbd,#555);"></div>
<div class="t" style="left:737.2px;top:262.4px;font-size:15.5px;font-style:italic;color:#e2e2e2;letter-spacing:-0.6px;">fx</div>
<div class="t" style="left:736.4px;top:406.4px;font-size:16px;color:#e2e2e2;">A</div>
<div class="t" style="left:741.6px;top:448.6px;font-size:15px;color:#e2e2e2;">A</div>

</body></html>
